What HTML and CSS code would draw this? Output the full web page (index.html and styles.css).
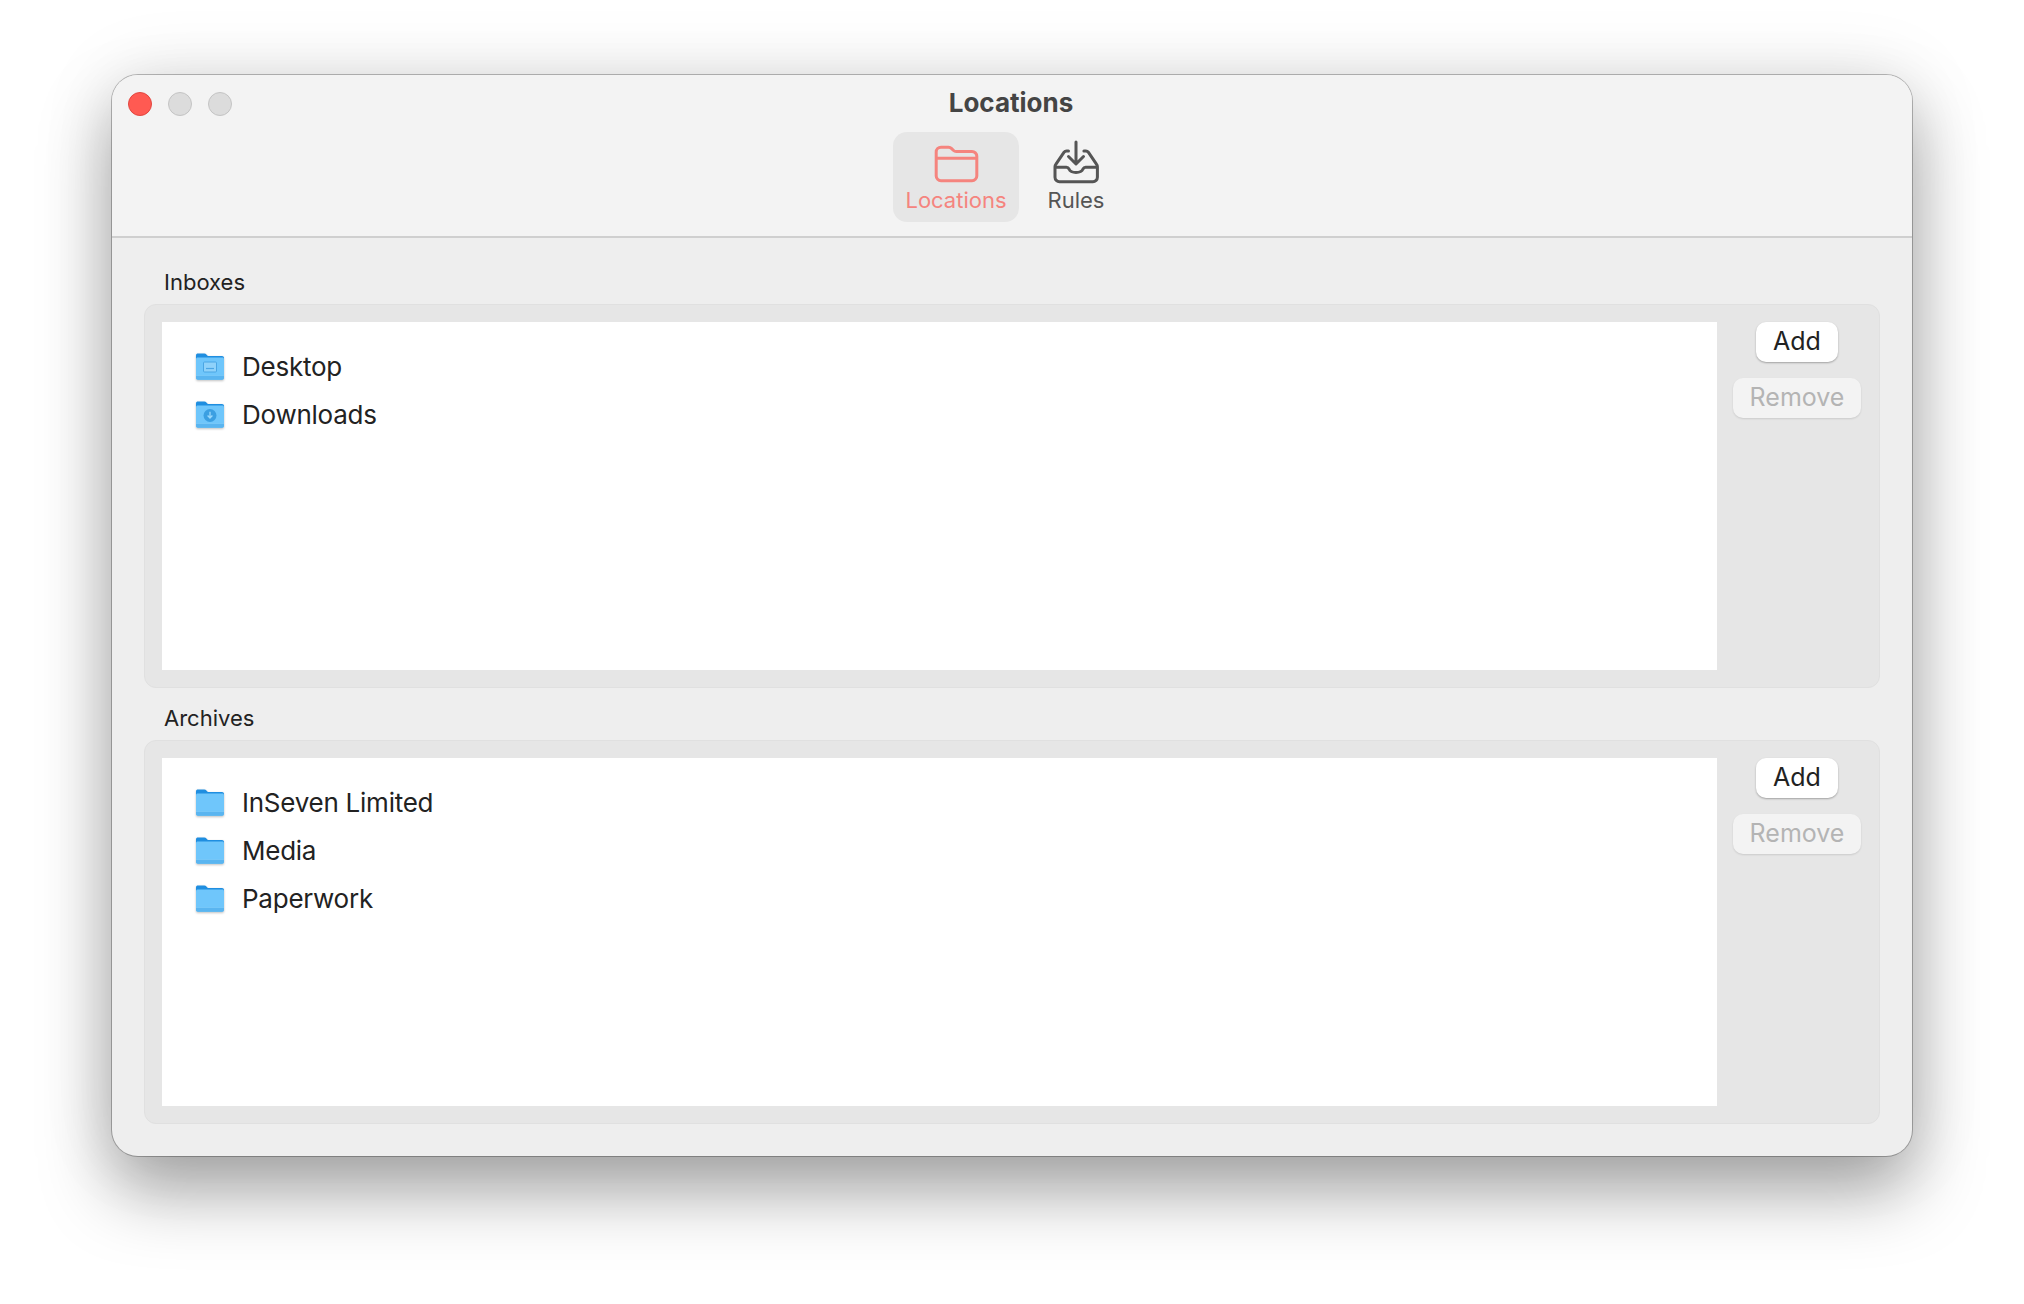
FILE: index.html
```html
<!DOCTYPE html>
<html lang="en">

<head>
    <meta charset="UTF-8">
    <meta name="viewport" content="width=device-width, initial-scale=1.0">
    <title>Locations</title>
    <link rel="stylesheet" href="styles.css">
</head>

<body>
    <svg class="defs" width="0" height="0">
        <symbol id="folder" viewBox="0 0 28 28">
            <path d="M0 2.5C0 1.2.8.6 2 .6h6.4c.9 0 1.4.3 2 .9l.9.9c.4.4.8.6 1.4.6H26c1.2 0 2 .8 2 2v6H0z" fill="#1f8ee0" />
            <path d="M0 6.2c0-1 .8-1.6 1.8-1.6h24.4c1 0 1.8.6 1.8 1.6v18.600c0 1.200-.8 2-2 2H2c-1.200 0-2-.8-2-2z" fill="#6fc6fb" />
            <path d="M0 22.400h28v2.400c0 1.200-.8 2-2 2H2c-1.200 0-2-.8-2-2z" fill="#5ab5f0" />
            <path d="M0 22.400h28" stroke="#82cffb" stroke-width=".7" />
        </symbol>
    </svg>

    <div class="window">
        <div class="traffic">
            <span class="light close"></span>
            <span class="light"></span>
            <span class="light"></span>
        </div>

        <header class="titlebar">
            <h1>Locations</h1>
            <div class="tabs">
                <div class="tab tab-locations active">
                    <svg width="48" height="44" viewBox="0 0 48 44" fill="none" stroke="currentColor" stroke-width="3">
                        <path d="M4.2 12a4.8 4.8 0 0 1 4.8-4.8h7.500c1.500 0 2.200.4 3.200 1.400l1.600 1.600c.9.9 1.600 1.300 3 1.300H40a4.800 4.800 0 0 1 4.800 4.800v19.600a4.800 4.800 0 0 1-4.800 4.800H9a4.800 4.800 0 0 1-4.800-4.800z" />
                        <path d="M4.2 18.200h40.600" />
                    </svg>
                    <span>Locations</span>
                </div>
                <div class="tab tab-rules">
                    <svg width="48" height="44" viewBox="0 0 48 44" fill="none" stroke="currentColor" stroke-width="3" stroke-linecap="round" stroke-linejoin="round">
                        <path d="M24 2v21.500M16.500 16.500l7.500 7.500 7.500-7.500" />
                        <path d="M16.500 11h-2c-1.100 0-1.800.4-2.400 1.200L3.800 24.400c-.5.7-.8 1.400-.8 2.300V37.200a4.500 4.500 0 0 0 4.500 4.500h33.400a4.500 4.500 0 0 0 4.500-4.500V26.700c0-.9-.3-1.600-.8-2.300l-8.300-12.200c-.6-.8-1.300-1.200-2.400-1.200h-2" />
                        <path d="M3.400 27.300h11c1.300 0 2 .5 2.600 1.700.9 2 3.200 3.500 7 3.500s6.100-1.500 7-3.500c.6-1.200 1.300-1.700 2.600-1.700h11" />
                    </svg>
                    <span>Rules</span>
                </div>
            </div>
        </header>

        <main class="content">
            <section class="section">
                <div class="section-label">Inboxes</div>
                <div class="group">
                    <ul class="list">
                        <li>
                            <span class="folder">
                                <svg width="28" height="28"><use href="#folder" /></svg>
                                <svg class="glyph" width="28" height="28" viewBox="0 0 28 28">
                                    <rect x="7.500" y="9" width="13" height="10" rx="1" fill="#8fd2fa" stroke="#4aa6e4" stroke-width="1" />
                                    <path d="M10 15.500h8" stroke="#4aa6e4" stroke-width="1.200" />
                                </svg>
                            </span>
                            Desktop
                        </li>
                        <li>
                            <span class="folder">
                                <svg width="28" height="28"><use href="#folder" /></svg>
                                <svg class="glyph" width="28" height="28" viewBox="0 0 28 28">
                                    <circle cx="14" cy="14.500" r="6.500" fill="#3b9fe2" />
                                    <path d="M14 10.800v6M11.600 14.500l2.400 2.500 2.400-2.500" fill="none" stroke="#9bd8fb" stroke-width="1.300" />
                                </svg>
                            </span>
                            Downloads
                        </li>
                    </ul>
                    <div class="actions">
                        <button>Add</button>
                        <button disabled>Remove</button>
                    </div>
                </div>
            </section>

            <section class="section">
                <div class="section-label">Archives</div>
                <div class="group">
                    <ul class="list">
                        <li>
                            <span class="folder"><svg width="28" height="28"><use href="#folder" /></svg></span>
                            InSeven Limited
                        </li>
                        <li>
                            <span class="folder"><svg width="28" height="28"><use href="#folder" /></svg></span>
                            Media
                        </li>
                        <li>
                            <span class="folder"><svg width="28" height="28"><use href="#folder" /></svg></span>
                            Paperwork
                        </li>
                    </ul>
                    <div class="actions">
                        <button>Add</button>
                        <button disabled>Remove</button>
                    </div>
                </div>
            </section>
        </main>
    </div>
</body>

</html>
```

FILE: styles.css
```css
html,
body {
    margin: 0;
    height: 100%;
    overflow: hidden;
}

body {
    background: white;
    font-family: Inter, 'Liberation Sans', sans-serif;
    color: #222;
    padding: 75px 112px 0;
    box-sizing: border-box;
}

.defs {
    position: absolute;
}

.window {
    position: relative;
    width: 1800px;
    height: 1081px;
    box-sizing: border-box;
    background: #eeeeee;
    border-radius: 26px;
    box-shadow:
        0 0 0 1px rgba(0, 0, 0, 0.26),
        0 36px 70px rgba(0, 0, 0, 0.34),
        0 0 74px rgba(0, 0, 0, 0.1);
}

.traffic {
    position: absolute;
    top: 17px;
    left: 16px;
    display: flex;
    gap: 16px;
}

.light {
    width: 24px;
    height: 24px;
    box-sizing: border-box;
    border-radius: 50%;
    background: #dcdcdc;
    border: 1px solid #c4c4c4;
}

.light.close {
    background: #ff5a52;
    border-color: #e2463f;
}

.titlebar {
    height: 161px;
    background: #f3f3f3;
    border-bottom: 2px solid #cfcfcf;
    border-radius: 26px 26px 0 0;
    display: flex;
    flex-direction: column;
    align-items: center;
}

h1 {
    margin: 12px 2px 13px 0;
    font-size: 26px;
    line-height: 32px;
    font-weight: 700;
    color: #444;
}

.tabs {
    display: flex;
    gap: 16px;
    padding-right: 14px;
}

.tab {
    height: 90px;
    box-sizing: border-box;
    padding-top: 8px;
    border-radius: 14px;
    display: flex;
    flex-direction: column;
    align-items: center;
    color: #555;
    font-size: 22px;
    line-height: 26px;
}

.tab-locations {
    width: 126px;
}

.tab-rules {
    width: 82px;
}

.tab svg {
    margin-bottom: 3px;
}

.tab.active {
    background: #e6e6e6;
    color: #f5847e;
}

.content {
    padding: 30px 32px 0;
    display: flex;
    flex-direction: column;
    gap: 16px;
}

.section-label {
    padding: 0 0 8px 20px;
    font-size: 22px;
    line-height: 28px;
    color: #222;
}

.group {
    height: 384px;
    box-sizing: border-box;
    padding: 17px 18px 17px 17px;
    background: #e6e6e6;
    border: 1px solid #e0e0e0;
    border-radius: 12px;
    display: flex;
}

.list {
    flex: 1;
    margin: 0;
    padding: 21px 0 0 34px;
    list-style: none;
    background: white;
}

.list li {
    height: 48px;
    box-sizing: border-box;
    padding-bottom: 2px;
    display: flex;
    align-items: center;
    gap: 18px;
    font-size: 26px;
    letter-spacing: -0.25px;
    color: #222;
}

.folder {
    position: relative;
    width: 28px;
    height: 28px;
    margin-top: 2px;
    flex: none;
    filter: drop-shadow(0 1px 1px rgba(0, 0, 0, 0.25));
}

.folder svg {
    display: block;
}

.folder .glyph {
    position: absolute;
    top: 0;
    left: 0;
}

.actions {
    width: 128px;
    margin-left: 16px;
    display: flex;
    flex-direction: column;
    align-items: center;
    gap: 16px;
}

button {
    height: 40px;
    padding: 0 17px 2px;
    background: white;
    color: #222;
    border: none;
    border-radius: 10px;
    font-family: inherit;
    font-size: 25px;
    box-shadow: 0 1px 2px rgba(0, 0, 0, 0.3);
}

button:disabled {
    background: #f3f3f3;
    color: #b4b4b4;
    box-shadow: 0 1px 2px rgba(0, 0, 0, 0.12);
}
```
